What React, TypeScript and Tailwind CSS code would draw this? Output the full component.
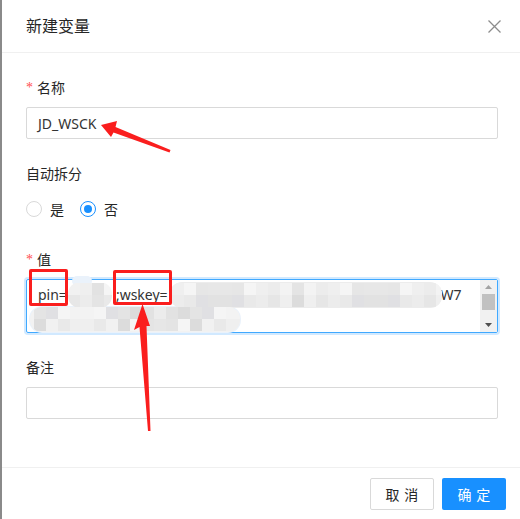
import React from "react"

const FONT = "font-['Noto_Sans','Noto_Sans_CJK_SC',sans-serif]"

// mosaic cells that hide the secret value (12px blocks)
const SHADES = ["#ececec", "#e4e4e4", "#efefef", "#e2e2e2", "#f3f3f3", "#e7e7e7", "#dfdfdf", "#f1f1f1", "#e9e9e9", "#e0e0e3", "#f5f5f5", "#e6e6e6", "#dcdcdc"]

function cells(x0: number, y0: number, cols: number, rows: number, seed: number) {
  const out: { x: number; y: number; c: string }[] = []
  for (let r = 0; r < rows; r++)
    for (let c = 0; c < cols; c++)
      out.push({ x: x0 + c * 12, y: y0 + r * 12, c: SHADES[(c * c * 3 + c * 5 + r * 11 + seed * 7) % SHADES.length] })
  return out
}

// coordinates relative to the overlay svg (left 24, top 276)
const PART_A = cells(44, 7, 4, 2, 1)
const PART_B = cells(148, 7, 23, 2, 4)
const PART_C = cells(10, 31, 18, 2, 2)

function Label({ text, required }: { text: string; required?: boolean }) {
  return (
    <div className="h-[22px] mb-2 flex items-center text-[14px] leading-[22px] text-[#262626]">
      {required && (
        <span className="mr-1 text-[#ff4d4f] font-['Liberation_Serif',serif] text-[14px] leading-none">*</span>
      )}
      <span>{text}</span>
    </div>
  )
}

function Radio({ label, checked }: { label: string; checked?: boolean }) {
  return (
    <label className="flex items-center mr-2">
      <span
        className={
          checked
            ? "w-4 h-4 rounded-full border border-[#1890ff] flex items-center justify-center"
            : "w-4 h-4 rounded-full border border-[#d9d9d9]"
        }
      >
        {checked && <span className="w-2 h-2 rounded-full bg-[#1890ff]" />}
      </span>
      <span className="px-2 text-[14px] text-[#262626]">{label}</span>
    </label>
  )
}

export default function App() {
  return (
    <div className={`relative w-[520px] h-[519px] overflow-hidden bg-[#8a8a8a] ${FONT}`}>
      <div className="ml-[2px] w-[520px] h-full bg-white">
        {/* Header */}
        <div className="h-[53px] border-b border-[#f0f0f0] flex items-center justify-between pl-6">
          <h3 className="text-[16px] font-normal text-[#262626] leading-[22px]">新建变量</h3>
          <button className="w-14 h-[52px] flex items-center justify-center">
            <svg width="13" height="13" viewBox="0 0 13 13">
              <path d="M0.5 0.5 L12.5 12.5 M12.5 0.5 L0.5 12.5" stroke="#8c8c8c" strokeWidth="1.3" />
            </svg>
          </button>
        </div>

        {/* Body */}
        <div className="px-6 pt-6 pb-6">
          <div className="mb-6">
            <Label text="名称" required />
            <div className="h-8 border border-[#d9d9d9] rounded-[2px] px-[11px] flex items-center text-[14px] text-[#333]">
              JD_WSCK
            </div>
          </div>

          <div className="mb-6">
            <Label text="自动拆分" />
            <div className="h-8 flex items-center">
              <Radio label="是" />
              <Radio label="否" checked />
            </div>
          </div>

          <div className="mb-6">
            <Label text="值" required />
            <div className="h-[54px] border border-[#40a9ff] rounded-[2px] shadow-[0_0_0_2px_rgba(24,144,255,0.2)] flex">
              <div className="flex-1 px-[11px] py-1 text-[14px] leading-[22px] text-[#333] whitespace-nowrap">
                <span>pin=</span>
                <span className="inline-block w-[49px]" />
                <span>;wskey=</span>
                <span className="inline-block w-[273px]" />
                <span>W7</span>
              </div>
              <div className="w-[17px] bg-[#f1f1f1] flex flex-col items-center">
                <div className="h-[14px] flex items-center justify-center">
                  <svg width="7" height="4" viewBox="0 0 7 4"><path d="M3.5 0 L7 4 L0 4 Z" fill="#a3a3a3" /></svg>
                </div>
                <div className="w-[13px] h-[16px] bg-[#c1c1c1]" />
                <div className="flex-1" />
                <div className="h-[14px] flex items-center justify-center">
                  <svg width="7" height="4" viewBox="0 0 7 4"><path d="M0 0 L7 0 L3.5 4 Z" fill="#505050" /></svg>
                </div>
              </div>
            </div>
          </div>

          <div className="mb-6">
            <Label text="备注" />
            <div className="h-8 border border-[#d9d9d9] rounded-[2px]" />
          </div>
        </div>

        {/* Footer */}
        <div className="border-t border-[#f0f0f0] px-4 py-[10px] flex justify-end gap-2">
          <button className="h-8 w-16 border border-[#d9d9d9] rounded-[2px] text-[14px] text-[#262626] tracking-[0.34em] pl-[0.34em]">
            取消
          </button>
          <button className="h-8 w-16 rounded-[2px] bg-[#1890ff] text-[14px] text-white tracking-[0.34em] pl-[0.34em]">
            确定
          </button>
        </div>
      </div>

      {/* Mosaic over the value field */}
      <svg className="absolute left-[24px] top-[276px] pointer-events-none" width="420" height="60" viewBox="0 0 420 60">
        <defs>
          <clipPath id="ma"><rect x="44" y="6" width="44" height="26" rx="12" /></clipPath>
          <clipPath id="mb"><rect x="146" y="6" width="272" height="26" rx="12" /></clipPath>
          <clipPath id="mc"><rect x="6" y="31" width="210" height="25" rx="12" /></clipPath>
        </defs>
        <rect x="5" y="30" width="212" height="27" rx="13" fill="#eaf2fb" />
        <rect x="48" y="0" width="20" height="10" rx="5" fill="#eaf2fb" />
        <g clipPath="url(#ma)">
          {PART_A.map((m, i) => (
            <rect key={i} x={m.x} y={m.y} width="12" height="12" fill={m.c} />
          ))}
        </g>
        <g clipPath="url(#mb)">
          <rect x="146" y="6" width="272" height="26" fill="#ececec" />
          {PART_B.map((m, i) => (
            <rect key={i} x={m.x} y={m.y} width="12" height="12" fill={m.c} />
          ))}
        </g>
        <g clipPath="url(#mc)">
          <rect x="6" y="31" width="210" height="25" fill="#f2f2f2" />
          {PART_C.map((m, i) => (
            <rect key={i} x={m.x} y={m.y} width="12" height="12" fill={m.c} />
          ))}
        </g>
      </svg>

      {/* Annotation boxes */}
      <div className="absolute left-[29px] top-[269px] w-[39px] h-[37px] border-[3px] border-[#fa1e1e] rounded-[2px] pointer-events-none" />
      <div className="absolute left-[113px] top-[270px] w-[59px] h-[35px] border-[3px] border-[#fa1e1e] rounded-[2px] pointer-events-none" />

      {/* Annotation arrows */}
      <svg className="absolute left-0 top-0 pointer-events-none" width="520" height="519" viewBox="0 0 520 519">
        <polygon points="101,125 117,121 115.5,127 170.5,150 169.5,152.5 113.5,132.5 111,137" fill="#fa1e1e" />
        <polygon points="142.5,304 150,326 146.5,326 150.5,431 148,431 139.5,327 134,330" fill="#fa1e1e" />
      </svg>
    </div>
  )
}
